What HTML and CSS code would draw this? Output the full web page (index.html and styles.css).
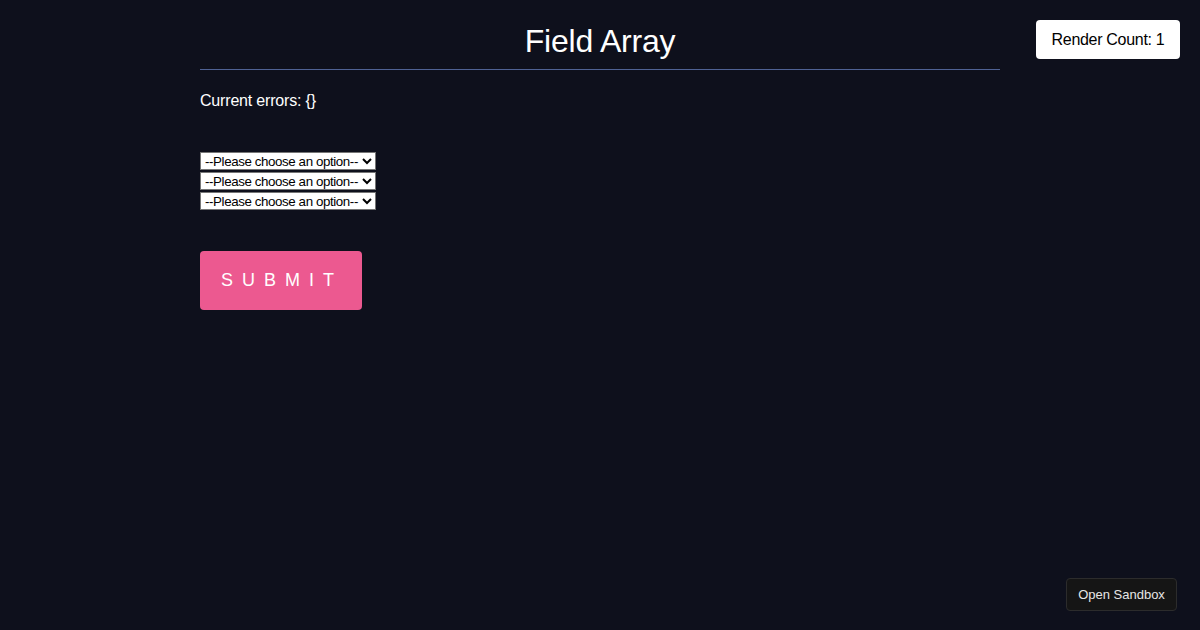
FILE: index.html
```html
<!DOCTYPE html>
<html>
<head>
<meta charset="utf-8">
<link rel="stylesheet" href="styles.css">
</head>
<body>
<div class="render-count">Render Count: 1</div>
<form class="form">
  <h1 class="title">Field Array</h1>
  <p class="errors">Current errors: {}</p>
  <div class="selects">
    <select class="sel"><option>--Please choose an option--</option></select>
    <select class="sel"><option>--Please choose an option--</option></select>
    <select class="sel"><option>--Please choose an option--</option></select>
  </div>
  <button type="button" class="submit">Submit</button>
</form>
<button type="button" class="sandbox">Open Sandbox</button>
</body>
</html>
```

FILE: styles.css
```css
html, body {
  margin: 0;
  padding: 0;
  background: #0e101c;
  height: 100%;
}
body {
  font-family: "Liberation Sans", Arial, sans-serif;
  color: #fff;
}
.form {
  width: 800px;
  margin: 0 auto;
  display: flex;
  flex-direction: column;
  align-items: flex-start;
}
.title {
  align-self: stretch;
  margin: 23px 0 0;
  font-size: 32px;
  font-weight: 100;
  letter-spacing: -0.2px;
  text-align: center;
  padding-bottom: 9px;
  border-bottom: 1px solid rgb(79, 98, 148);
  line-height: 1.15;
}
.errors {
  margin: 22px 0 0;
  font-size: 16px;
  letter-spacing: -0.18px;
  line-height: 1.15;
}
.selects {
  margin-top: 42px;
  display: flex;
  flex-direction: column;
  gap: 2px;
}
.sel {
  width: 176px;
  height: 18px;
  font-family: "Liberation Sans", Arial, sans-serif;
  font-size: 13.33px;
  letter-spacing: -0.4px;
  background: #fff;
  color: #000;
  border: 1px solid #767676;
  border-radius: 0;
  padding: 0;
  margin: 0;
}
.submit {
  margin-top: 41px;
  width: 162px;
  height: 59px;
  background: #ec5990;
  color: #fff;
  border: none;
  border-radius: 4px;
  text-transform: uppercase;
  letter-spacing: 9px;
  font-family: "Liberation Sans", Arial, sans-serif;
  font-size: 18px;
  text-align: left;
  white-space: nowrap;
  padding: 0 0 0 21px;
}
.render-count {
  position: fixed;
  top: 20px;
  right: 20px;
  width: 144px;
  height: 39px;
  box-sizing: border-box;
  background: #fff;
  color: #000;
  border-radius: 4px;
  font-size: 16px;
  letter-spacing: -0.3px;
  display: flex;
  align-items: center;
  justify-content: center;
}
.sandbox {
  position: fixed;
  right: 23px;
  bottom: 19px;
  width: 111px;
  height: 33px;
  background: #151515;
  color: #e6e6e6;
  border: 1px solid #2c2c2c;
  border-radius: 4px;
  font-family: "Liberation Sans", Arial, sans-serif;
  font-size: 13px;
  padding: 0;
}
```
